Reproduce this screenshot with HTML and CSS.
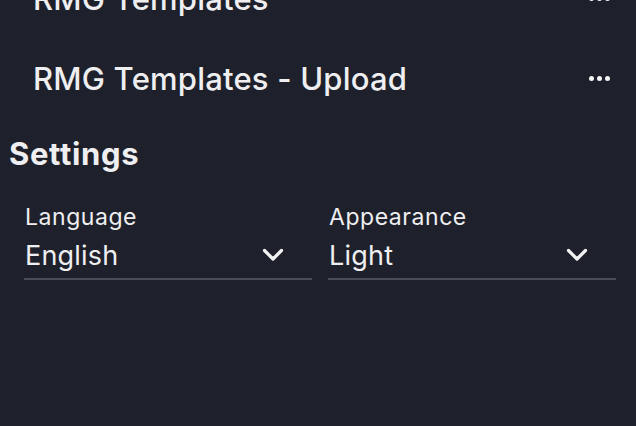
FILE: index.html
```html
<!DOCTYPE html>
<html>
<head>
<meta charset="utf-8">
<link rel="stylesheet" href="styles.css">
</head>
<body>
<div class="screen">
  <ul class="list">
    <li class="row"><span class="row-title">RMG Templates</span><span class="more"><i></i><i></i><i></i></span></li>
    <li class="row"><span class="row-title">RMG Templates - Upload</span><span class="more"><i></i><i></i><i></i></span></li>
  </ul>
  <h2 class="section-title">Settings</h2>
  <div class="fields">
    <div class="field">
      <div class="label">Language</div>
      <div class="select"><span class="value">English</span>
        <svg class="chev" width="22" height="14" viewBox="0 0 22 14"><path d="M2.5 2.5 L11 11 L19.5 2.5" fill="none" stroke="#f2f2f2" stroke-width="3.2" stroke-linecap="round" stroke-linejoin="round"/></svg>
      </div>
    </div>
    <div class="field">
      <div class="label">Appearance</div>
      <div class="select"><span class="value">Light</span>
        <svg class="chev" width="22" height="14" viewBox="0 0 22 14"><path d="M2.5 2.5 L11 11 L19.5 2.5" fill="none" stroke="#f2f2f2" stroke-width="3.2" stroke-linecap="round" stroke-linejoin="round"/></svg>
      </div>
    </div>
  </div>
</div>
</body>
</html>
```
FILE: styles.css
```css
html, body {
  margin: 0;
  padding: 0;
  background: #1e212b;
}
body {
  font-family: Inter, "Noto Sans", sans-serif;
  color: #efeff1;
  width: 636px;
  height: 426px;
  overflow: hidden;
}
.screen {
  display: flex;
  flex-direction: column;
}
.list {
  list-style: none;
  margin: -42px 0 0 0;
  padding: 0;
}
.row {
  display: flex;
  align-items: center;
  justify-content: space-between;
  height: 80px;
  padding: 0 26px 0 33px;
}
.row-title {
  font-size: 31px;
  font-weight: 500;
  letter-spacing: 0.2px;
}
.more {
  display: flex;
  gap: 3px;
}
.more i {
  display: block;
  width: 5px;
  height: 5px;
  border-radius: 50%;
  background: #f4f4f4;
}
.section-title {
  margin: 0;
  padding: 18px 0 0 9px;
  font-size: 31px;
  font-weight: 700;
  letter-spacing: 0.65px;
  line-height: 36px;
}
.fields {
  display: grid;
  grid-template-columns: 288px 288px;
  gap: 16px;
  padding: 30px 20px 0 24px;
}
.field {
  display: flex;
  flex-direction: column;
}
.label {
  font-size: 23px;
  line-height: 30px;
  letter-spacing: 0.55px;
  padding-left: 1px;
}
.select {
  display: flex;
  align-items: center;
  justify-content: space-between;
  height: 46px;
  border-bottom: 2px solid #4a4d56;
  padding: 0 28px 0 1px;
}
.value {
  font-size: 27px;
  letter-spacing: 0.2px;
}
.chev {
  display: block;
}
```
